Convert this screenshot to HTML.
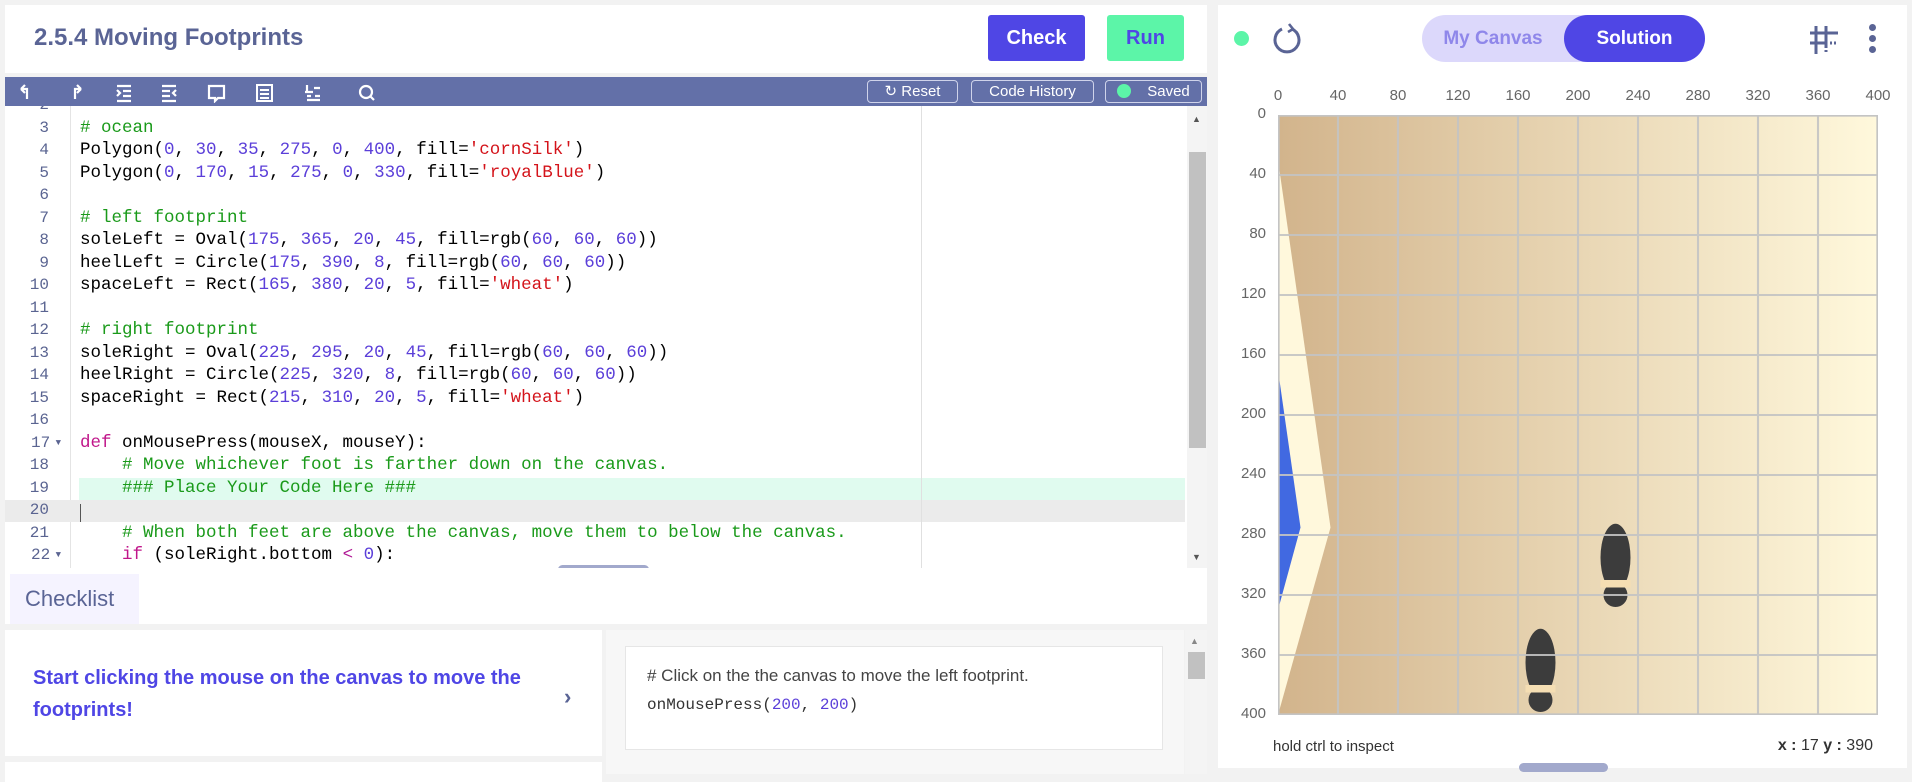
<!DOCTYPE html>
<html><head><meta charset="utf-8"><style>
*{box-sizing:border-box;margin:0;padding:0}
body{width:1912px;height:774px;background:#f2f2f2;font-family:"Liberation Sans",sans-serif;position:relative;overflow:hidden}
.abs{position:absolute}
.code{font-family:"Liberation Mono",monospace;font-size:17.5px;color:#000;white-space:pre}
.ln{position:absolute;left:0;width:56px;text-align:right;color:#5a6491;font-family:"Liberation Mono",monospace;font-size:16px}
.c{color:#1a9a1a}.n{color:#5b3fd9}.s{color:#d4141b}.k{color:#c0168a}.o{color:#b01895}
.tb{position:absolute;top:3px;height:23px;border:1px solid #cfd3ea;border-radius:4px;color:#fff;font-size:15px;line-height:21px;text-align:center}
</style></head><body>
<div class="abs" style="left:5px;top:5px;width:1202px;height:68px;background:#fff"></div>
<div class="abs" style="left:34px;top:24px;font-size:24px;color:#5a6495;font-weight:bold">2.5.4 Moving Footprints</div>
<div class="abs" style="left:988px;top:15px;width:97px;height:46px;background:#4f46e5;border-radius:3px;color:#fff;font-size:20px;font-weight:bold;text-align:center;line-height:46px">Check</div>
<div class="abs" style="left:1107px;top:15px;width:77px;height:46px;background:#5cf5a8;border-radius:3px;color:#4f46e5;font-size:20px;font-weight:bold;text-align:center;line-height:46px">Run</div>
<div class="abs" style="left:5px;top:77px;width:1202px;height:29px;background:#6370a8">
<svg class="abs" style="left:12px;top:4px" width="380" height="22" fill="none" stroke="#fff" stroke-width="2.2">
<path d="M10 18V8H4M4 8l4-4M4 8l4 4"/>
<path d="M58 18V8h6M64 8l-4-4M64 8l-4 4"/>
<path d="M100 5h14M106 10h8M106 15h8M100 20h14M100 9l3 3-3 3"/>
<path d="M145 5h14M145 10h8M145 15h8M145 20h14M159 9l-3 3 3 3"/>
<path d="M192 5h15v12h-6l-3 3v-3h-6z"/>
<path d="M240 4h15v16h-15zM243 9h9M243 13h9M243 17h9" stroke-width="2"/>
<path d="M290 4v7h6M290 11h-2M297 7h6M290 19h13M290 15h4M298 15h5"/>
<circle cx="349" cy="11" r="6"/><path d="M353 15l4 4"/>
</svg>
<div class="tb" style="left:862px;width:91px">&#x21bb; Reset</div>
<div class="tb" style="left:966px;width:123px">Code History</div>
<div class="tb" style="left:1100px;width:97px"><span style="display:inline-block;width:14px;height:14px;border-radius:7px;background:#5cf5a8;vertical-align:-2px;margin-right:16px"></span>Saved</div>
</div>
<div class="abs" style="left:5px;top:106px;width:1202px;height:462px;background:#fff;overflow:hidden">
<div class="abs" style="left:0;top:0;width:66px;height:462px;background:#fff;border-right:1px solid #e4e4e4"></div>
<div class="abs" style="left:74px;top:372px;width:1106px;height:22px;background:#e0fbef"></div>
<div class="abs" style="left:0;top:394px;width:1180px;height:22px;background:#ebebeb"></div>
<div class="abs" style="left:916px;top:0;width:1px;height:462px;background:#e0e0e0"></div>
<div class="abs" style="left:1182px;top:0;width:20px;height:462px;background:#f4f4f4"></div>
<div class="abs" style="left:1184px;top:46px;width:17px;height:296px;background:#c1c1c1"></div>
<div class="abs" style="left:1187px;top:8px;font-size:9px;color:#555">&#9650;</div>
<div class="abs" style="left:1187px;top:446px;font-size:9px;color:#555">&#9660;</div>
<div class="abs" style="left:553px;top:459px;width:91px;height:9px;border-radius:5px;background:#a2a9cc"></div>
<div id="g"></div>
</div>
<script>
var L=[[2,""],[3,'<span class="c"># ocean</span>'],[4,'Polygon(<span class="n">0</span>, <span class="n">30</span>, <span class="n">35</span>, <span class="n">275</span>, <span class="n">0</span>, <span class="n">400</span>, fill=<span class="s">\'cornSilk\'</span>)'],
[5,'Polygon(<span class="n">0</span>, <span class="n">170</span>, <span class="n">15</span>, <span class="n">275</span>, <span class="n">0</span>, <span class="n">330</span>, fill=<span class="s">\'royalBlue\'</span>)'],[6,''],
[7,'<span class="c"># left footprint</span>'],[8,'soleLeft = Oval(<span class="n">175</span>, <span class="n">365</span>, <span class="n">20</span>, <span class="n">45</span>, fill=rgb(<span class="n">60</span>, <span class="n">60</span>, <span class="n">60</span>))'],
[9,'heelLeft = Circle(<span class="n">175</span>, <span class="n">390</span>, <span class="n">8</span>, fill=rgb(<span class="n">60</span>, <span class="n">60</span>, <span class="n">60</span>))'],
[10,'spaceLeft = Rect(<span class="n">165</span>, <span class="n">380</span>, <span class="n">20</span>, <span class="n">5</span>, fill=<span class="s">\'wheat\'</span>)'],[11,''],
[12,'<span class="c"># right footprint</span>'],[13,'soleRight = Oval(<span class="n">225</span>, <span class="n">295</span>, <span class="n">20</span>, <span class="n">45</span>, fill=rgb(<span class="n">60</span>, <span class="n">60</span>, <span class="n">60</span>))'],
[14,'heelRight = Circle(<span class="n">225</span>, <span class="n">320</span>, <span class="n">8</span>, fill=rgb(<span class="n">60</span>, <span class="n">60</span>, <span class="n">60</span>))'],
[15,'spaceRight = Rect(<span class="n">215</span>, <span class="n">310</span>, <span class="n">20</span>, <span class="n">5</span>, fill=<span class="s">\'wheat\'</span>)'],[16,''],
['17 \u25BE','<span class="k">def</span> onMousePress(mouseX, mouseY):'],[18,'    <span class="c"># Move whichever foot is farther down on the canvas.</span>'],
[19,'    <span class="c">### Place Your Code Here ###</span>'],[20,''],[21,'    <span class="c"># When both feet are above the canvas, move them to below the canvas.</span>'],
['22 \u25BE','    <span class="k">if</span> (soleRight.bottom <span class="o">&lt;</span> <span class="n">0</span>):']];
var h='';L.forEach(function(l,i){var y=-12+i*22.5;var num=String(l[0]);var pad=num.indexOf('\u25BE')>0?'':'padding-right:12px;';
h+='<div class="ln" style="top:'+y+'px;'+pad+'line-height:22px">'+num.replace(' \u25BE','<span style="font-size:9px;vertical-align:2px"> \u25BC</span>')+'</div><div class="code abs" style="left:75px;top:'+y+'px;line-height:22px">'+l[1]+'</div>';});
h+='<div class="abs" style="left:75px;top:398px;width:1px;height:18px;background:#555"></div>';
document.getElementById('g').outerHTML=h;
</script>
<div class="abs" style="left:5px;top:568px;width:1202px;height:56px;background:#fff"></div>
<div class="abs" style="left:10px;top:574px;width:129px;height:50px;background:#f5f3ff;color:#5a6495;font-size:22px;line-height:50px;padding-left:15px">Checklist</div>
<div class="abs" style="left:5px;top:630px;width:597px;height:126px;background:#fff"></div>
<div class="abs" style="left:5px;top:762px;width:597px;height:20px;background:#fff"></div>
<div class="abs" style="left:33px;top:662px;width:520px;color:#4f46e5;font-size:20px;line-height:32px;font-weight:bold">Start clicking the mouse on the canvas to move the footprints!</div>
<div class="abs" style="left:564px;top:684px;color:#5a6495;font-size:22px;font-weight:bold">&#8250;</div>
<div class="abs" style="left:606px;top:630px;width:578px;height:144px;background:#f7f7f7"></div>
<div class="abs" style="left:1185px;top:630px;width:22px;height:144px;background:#f4f4f4"></div>
<div class="abs" style="left:1188px;top:652px;width:17px;height:27px;background:#c1c1c1"></div>
<div class="abs" style="left:1190px;top:636px;font-size:9px;color:#888">&#9650;</div>
<div class="abs" style="left:625px;top:646px;width:538px;height:104px;background:#fff;border:1px solid #e6e6e6"></div>
<div class="abs" style="left:647px;top:666px;color:#444;font-size:17px">#&nbsp;Click on the the canvas to move the left footprint.</div>
<div class="abs code" style="left:647px;top:696px;color:#333;font-size:16px">onMousePress(<span class="n">200</span>, <span class="n">200</span>)</div>
<div class="abs" style="left:1218px;top:5px;width:689px;height:763px;background:#fff"></div>
<div class="abs" style="left:1234px;top:31px;width:15px;height:15px;border-radius:8px;background:#5cf5a8"></div>
<svg class="abs" style="left:1270px;top:22px" width="34" height="34" fill="none" stroke="#5a6495" stroke-width="3"><path d="M22 7a12 12 0 1 1-10 0"/><path d="M19 2l4 5-5 3" stroke-width="2.6"/></svg>
<div class="abs" style="left:1422px;top:15px;width:283px;height:47px;border-radius:24px;background:#dcd8fb"></div>
<div class="abs" style="left:1564px;top:15px;width:141px;height:47px;border-radius:24px;background:#4f46e5;color:#fff;font-size:19px;font-weight:bold;text-align:center;line-height:47px">Solution</div>
<div class="abs" style="left:1422px;top:15px;width:142px;height:47px;color:#8f87ea;font-size:19px;font-weight:bold;text-align:center;line-height:47px">My Canvas</div>
<svg class="abs" style="left:1808px;top:24px" width="32" height="32" stroke="#5a6495" stroke-width="3" fill="none"><path d="M8 2v28M18 2v20M2 9h28M2 19h16"/><path d="M18 22v8M22 19h8" stroke-dasharray="2 2"/></svg>
<div class="abs" style="left:1869px;top:24px;width:7px;height:7px;border-radius:4px;background:#5a6495;box-shadow:0 11px 0 #5a6495,0 22px 0 #5a6495"></div>
<div id="ax"></div>
<script>
var a='';for(var i=0;i<=10;i++){var v=i*40,p=i*60;
a+='<div class="abs" style="left:'+(1278+p-30)+'px;top:87px;width:60px;text-align:center;font-size:15px;color:#666">'+v+'</div>';
a+='<div class="abs" style="left:1226px;top:'+(115+p-10)+'px;width:40px;text-align:right;font-size:15px;color:#666">'+v+'</div>';}
document.getElementById('ax').outerHTML=a;
</script>
<svg class="abs" style="left:1278px;top:115px" width="600" height="600" viewBox="0 0 400 400">
<defs><linearGradient id="gr" x1="0" y1="0" x2="1" y2="0"><stop offset="0" stop-color="#d2b48c"/><stop offset="1" stop-color="#fff8dc"/></linearGradient></defs>
<rect width="400" height="400" fill="url(#gr)"/>
<polygon points="0,30 35,275 0,400" fill="#fff8dc"/>
<polygon points="0,170 15,275 0,330" fill="#4169e1"/>
<ellipse cx="175" cy="365" rx="10" ry="22.5" fill="#3c3c3c"/><circle cx="175" cy="390" r="8" fill="#3c3c3c"/><rect x="165" y="380" width="20" height="5" fill="#f5deb3"/>
<ellipse cx="225" cy="295" rx="10" ry="22.5" fill="#3c3c3c"/><circle cx="225" cy="320" r="8" fill="#3c3c3c"/><rect x="215" y="310" width="20" height="5" fill="#f5deb3"/>
<g stroke="#c4c4c4" stroke-width="1.4" opacity="0.9">
<path d="M40 0V400M80 0V400M120 0V400M160 0V400M200 0V400M240 0V400M280 0V400M320 0V400M360 0V400M0 40H400M0 80H400M0 120H400M0 160H400M0 200H400M0 240H400M0 280H400M0 320H400M0 360H400"/>
</g>
<rect x="0.5" y="0.5" width="399" height="399" fill="none" stroke="#c4c4c4" stroke-width="1.2"/>
</svg>
<div class="abs" style="left:1273px;top:738px;font-size:15px;color:#333">hold ctrl to inspect</div>
<div class="abs" style="left:1760px;top:737px;width:113px;text-align:right;font-size:16px;color:#333"><b>x :</b> 17 <b>y :</b> 390</div>
<div class="abs" style="left:1519px;top:763px;width:89px;height:9px;border-radius:5px;background:#a2a9cc"></div>
</body></html>
